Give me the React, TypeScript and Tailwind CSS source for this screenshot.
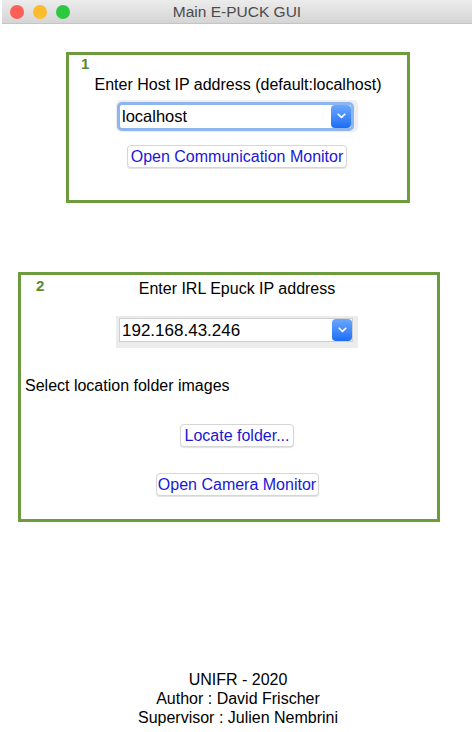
import React from "react";

const font = { fontFamily: '"Liberation Sans", Arial, sans-serif' };

function Chevron() {
  return (
    <svg width="9" height="6" viewBox="0 0 9 6" fill="none">
      <path d="M1.2 1.2 L4.5 4.4 L7.8 1.2" stroke="white" strokeWidth="1.6" strokeLinecap="round" strokeLinejoin="round" />
    </svg>
  );
}

function Combo({ value, focused, size }: { value: string; focused?: boolean; size: string }) {
  return (
    <div
      className={
        focused
          ? "flex w-[242px] h-[32px] items-center rounded-[5px] bg-[#eeeeee] pl-[1px] pr-[4px]"
          : "flex w-[242px] h-[32px] items-start bg-[#ececec] pl-[3px] pr-[5px] pt-[2px]"
      }
    >
      <div
        className={
          focused
            ? "flex flex-1 h-[29px] items-center rounded-[5px] border-[3px] border-[#8db5f0] bg-white"
            : "flex flex-1 h-[24px] items-center border border-[#cfcfcf] bg-white"
        }
      >
        <span className={`flex-1 pl-[2px] ${size} leading-none text-black`}>{value}</span>
        <div className="flex h-full w-[20px] items-center justify-center rounded-[4px] bg-gradient-to-b from-[#6aa8ff] to-[#1b6cf5]">
          <Chevron />
        </div>
      </div>
    </div>
  );
}

function MacButton({ label, width }: { label: string; width: string }) {
  return (
    <div
      className={`${width} flex h-[23px] items-center justify-center rounded-[4px] border border-[#d6d6d6] bg-white text-[16px] leading-none text-[#1a17d6] shadow-[0_1px_1px_rgba(0,0,0,0.12)]`}
    >
      {label}
    </div>
  );
}

export default function App() {
  return (
    <div className="relative h-[732px] w-[474px] overflow-hidden bg-white" style={font}>
      {/* title bar */}
      <div className="relative ml-[2px] mr-[2px] flex h-[24px] items-center border-b border-[#c4c4c4] bg-gradient-to-b from-[#ececec] to-[#d5d5d5]">
        <div className="absolute left-[8px] top-[5px] flex items-center gap-[9px]">
          <div className="h-[14px] w-[14px] rounded-full bg-[#fc5f57]" />
          <div className="h-[14px] w-[14px] rounded-full bg-[#fdbc2e]" />
          <div className="h-[14px] w-[14px] rounded-full bg-[#2bc840]" />
        </div>
        <div className="flex-1 text-center text-[15.5px] text-[#4b4b4b]">Main E-PUCK GUI</div>
      </div>

      {/* box 1 */}
      <div className="ml-[66px] mt-[28px] flex h-[151px] w-[344px] flex-col border-[3px] border-[#6c9c3d]">
        <div className="mt-[1px] pl-[12px] text-[15px] font-bold leading-[16px] text-[#5a8a2c]">1</div>
        <div className="mt-[3px] text-center text-[16px] leading-[19px] text-black">
          Enter Host IP address (default:localhost)
        </div>
        <div className="mt-[6px] flex justify-center pr-[2px]">
          <Combo value="localhost" focused size="text-[16.5px]" />
        </div>
        <div className="mt-[13px] flex justify-center pr-[2px]">
          <MacButton label="Open Communication Monitor" width="w-[220px]" />
        </div>
      </div>

      {/* box 2 */}
      <div className="ml-[18px] mt-[69px] flex h-[250px] w-[422px] flex-col border-[3px] border-[#6c9c3d]">
        <div className="mt-[4px] grid">
          <div className="[grid-area:1/1] -mt-[1px] pl-[15px] text-[15px] font-bold leading-[16px] text-[#5a8a2c]">2</div>
          <div className="[grid-area:1/1] pl-[16px] text-center text-[16px] leading-[19px] text-black">
            Enter IRL Epuck IP address
          </div>
        </div>
        <div className="mt-[18px] flex justify-center pl-[16px]">
          <Combo value="192.168.43.246" size="text-[17px]" />
        </div>
        <div className="mt-[28px] pl-[4px] text-[16px] leading-[19px] text-black">Select location folder images</div>
        <div className="mt-[29px] flex justify-center pl-[16px]">
          <MacButton label="Locate folder..." width="w-[114px]" />
        </div>
        <div className="mt-[26px] flex justify-center pl-[16px]">
          <MacButton label="Open Camera Monitor" width="w-[163px]" />
        </div>
      </div>

      {/* footer */}
      <div className="mt-[148px] flex flex-col items-center pl-[2px] text-[16px] leading-[19px] text-black">
        <div>UNIFR - 2020</div>
        <div>Author : David Frischer</div>
        <div>Supervisor : Julien Nembrini</div>
      </div>
    </div>
  );
}
